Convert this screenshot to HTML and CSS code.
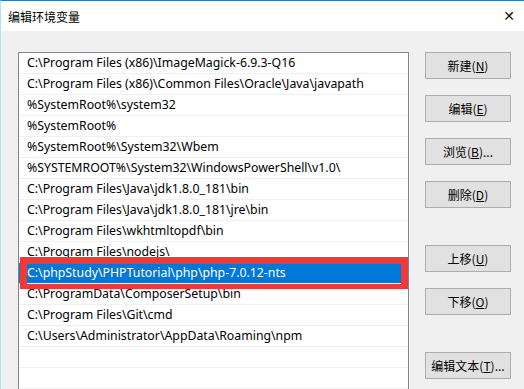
FILE: index.html
```html
<!DOCTYPE html>
<html lang="zh-CN">
<head>
  <meta charset="UTF-8">
  <title>编辑环境变量</title>
  <link rel="stylesheet" href="styles.css">
</head>
<body>
  <div class="window">
    <div class="titlebar">
      <span class="title">编辑环境变量</span>
      <span class="close">&#x2715;</span>
    </div>

    <div class="content">
      <div class="listbox">
        <div class="row">C:\Program Files (x86)\ImageMagick-6.9.3-Q16</div>
        <div class="row">C:\Program Files (x86)\Common Files\Oracle\Java\javapath</div>
        <div class="row">%SystemRoot%\system32</div>
        <div class="row">%SystemRoot%</div>
        <div class="row">%SystemRoot%\System32\Wbem</div>
        <div class="row">%SYSTEMROOT%\System32\WindowsPowerShell\v1.0\</div>
        <div class="row">C:\Program Files\Java\jdk1.8.0_181\bin</div>
        <div class="row">C:\Program Files\Java\jdk1.8.0_181\jre\bin</div>
        <div class="row">C:\Program Files\wkhtmltopdf\bin</div>
        <div class="row">C:\Program Files\nodejs\</div>
        <div class="row selected">C:\phpStudy\PHPTutorial\php\php-7.0.12-nts</div>
        <div class="row">C:\ProgramData\ComposerSetup\bin</div>
        <div class="row">C:\Program Files\Git\cmd</div>
        <div class="row">C:\Users\Administrator\AppData\Roaming\npm</div>
        <div class="row"></div>
        <div class="row"></div>

        <!-- red highlight drawn over the selected entry -->
        <div class="mark"></div>
      </div>

      <div class="buttons">
        <button>新建(<u>N</u>)</button>
        <button>编辑(<u>E</u>)</button>
        <button>浏览(<u>B</u>)...</button>
        <button>删除(<u>D</u>)</button>
        <button class="far">上移(<u>U</u>)</button>
        <button>下移(<u>O</u>)</button>
        <button class="far">编辑文本(<u>T</u>)...</button>
      </div>
    </div>
  </div>
</body>
</html>
```

FILE: styles.css
```css
* {
  margin: 0;
  padding: 0;
  box-sizing: border-box;
}

body {
  font-family: "Noto Sans", "Noto Sans CJK SC", sans-serif;
  font-size: 12.3px;
  color: #000;
  background-color: #f0f0f0;
  overflow: hidden;
}

.window {
  height: 389px;
  overflow: hidden;
  border-top: 1px solid #2b7ac4;
  border-left: 1px solid #a6e6f2;
  background-color: #f0f0f0;
}

.titlebar {
  height: 30px;
  background-color: #fff;
  display: flex;
  align-items: center;
  justify-content: space-between;
  padding: 0 9px 0 7px;
}

.title {
  font-family: "Noto Sans CJK SC", sans-serif;
  font-size: 12px;
  color: #000;
}

.close {
  font-family: "DejaVu Sans", sans-serif;
  font-size: 14px;
  color: #111;
}

.content {
  display: flex;
  align-items: flex-start;
  padding: 21px 13px 0 17px;
}

.listbox {
  position: relative;
  width: 391px;
  height: 337px;
  overflow: hidden;
  background-color: #fff;
  border: 1px solid #828790;
  border-bottom: none;
}

.row {
  height: 21px;
  line-height: 20px;
  padding-left: 8px;
  border-bottom: 1px solid #f0f0f0;
  white-space: nowrap;
  overflow: hidden;
}

.row.selected {
  background-color: #0078d7;
  color: #fff;
}

.mark {
  position: absolute;
  left: 1px;
  top: 204px;
  width: 388px;
  height: 32px;
  border: 7px solid #f03a3a;
  border-bottom-width: 5px;
}

.buttons {
  display: flex;
  flex-direction: column;
  margin-left: 16px;
}

button {
  width: 86px;
  height: 27px;
  margin-bottom: 16px;
  background-color: #e1e1e1;
  border: 1px solid #adadad;
  font-family: "Noto Sans CJK SC", sans-serif;
  font-size: 12px;
  color: #000;
}

button.far {
  margin-top: 21px;
}
```
